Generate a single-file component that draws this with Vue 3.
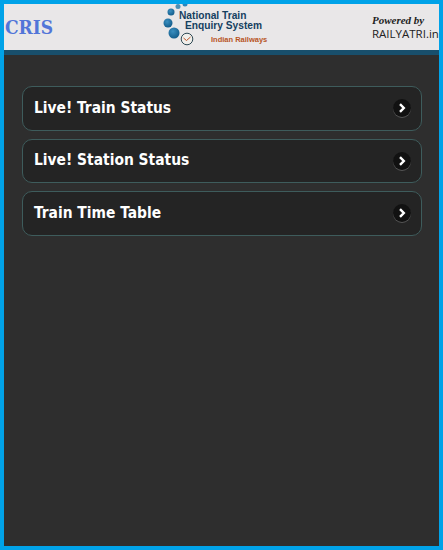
<script setup>
const items = ['Live! Train Status', 'Live! Station Status', 'Train Time Table']
</script>

<template>
  <div class="frame">
    <header class="head">
      <span class="cris">CRIS</span>
      <div class="ntes">
        <svg class="dots" width="42" height="46" viewBox="160 4 42 46">
          <defs>
            <radialGradient id="b" cx="40%" cy="35%" r="70%">
              <stop offset="0" stop-color="#3a8fc0" />
              <stop offset="1" stop-color="#115a88" />
            </radialGradient>
          </defs>
          <circle cx="185" cy="4" r="2.5" fill="#2a86bd" />
          <circle cx="178" cy="6.5" r="2.5" fill="#4a8fb5" />
          <circle cx="171" cy="12" r="3.5" fill="url(#b)" />
          <circle cx="168" cy="23" r="4.5" fill="url(#b)" />
          <circle cx="174" cy="33" r="5.5" fill="url(#b)" />
          <circle cx="187" cy="39" r="5.8" fill="#f0eeea" stroke="#2f4a55" stroke-width="1" />
          <path d="M183.5 38 L186.5 40.5 L190.5 37" fill="none" stroke="#c0562a" stroke-width="1" />
        </svg>
        <div class="ntes-text">
          <div class="t1">National Train</div>
          <div class="t2">Enquiry System</div>
          <div class="t3">Indian Railways</div>
        </div>
      </div>
      <div class="powered">
        <div class="by">Powered by</div>
        <div class="ry">RAILYATRI.in</div>
      </div>
    </header>
    <main class="body">
      <a v-for="item in items" :key="item" class="row">
        <span class="label">{{ item }}</span>
        <span class="arrow">
          <svg width="10" height="10" viewBox="0 0 10 10">
            <path d="M3 1.2 L6.8 5 L3 8.8" fill="none" stroke="#fff" stroke-width="2.4" />
          </svg>
        </span>
      </a>
    </main>
  </div>
</template>

<style>
html, body { margin: 0; padding: 0; }
</style>

<style scoped>
.frame {
  box-sizing: border-box;
  width: 443px;
  height: 550px;
  border: 4px solid #00a2e8;
  background: #2e2e2e;
  display: flex;
  flex-direction: column;
}
.head {
  box-sizing: border-box;
  height: 51px;
  flex: none;
  background: #e9e7e8;
  border-bottom: 5px solid #184f6c;
  display: flex;
  align-items: center;
  overflow: hidden;
}
.cris {
  flex: none;
  width: 155px;
  margin-left: 1px;
  font: bold 19px "DejaVu Serif Condensed", "DejaVu Serif", serif;
  color: #5275d8;
}
.ntes {
  flex: none;
  display: flex;
  width: 212px;
  height: 46px;
}
.dots { flex: none; margin-right: -42px; }
.ntes-text {
  font-family: "Liberation Sans", sans-serif;
  font-weight: bold;
  color: #15405f;
  font-size: 10.2px;
  line-height: 10.5px;
  padding-top: 6.5px;
  padding-left: 19px;
  white-space: nowrap;
}
.t2 { padding-left: 6px; }
.t3 {
  font-size: 7.5px;
  font-weight: bold;
  color: #b8551f;
  padding-left: 32px;
  line-height: 15px;
}
.powered {
  flex: none;
  width: 67px;
  color: #222;
  white-space: nowrap;
  overflow: hidden;
}
.by {
  font: italic bold 11px "Liberation Serif", cursive;
  line-height: 14px;
}
.ry {
  font: 11.5px "Open Sans", sans-serif;
  line-height: 14px;
}
.body {
  flex: 1;
  padding: 31px 17px 0 18px;
  display: flex;
  flex-direction: column;
  gap: 8px;
}
.row {
  box-sizing: border-box;
  height: 44.5px;
  border: 1px solid #3e5c5c;
  border-radius: 10px;
  background: #242424;
  display: flex;
  align-items: center;
  justify-content: space-between;
  padding: 0 10px 0 11px;
}
.label {
  font: bold 15.4px "DejaVu Sans Condensed", "DejaVu Sans", sans-serif;
  color: #fff;
  margin-top: -1px;
}
.arrow {
  width: 18px;
  height: 18px;
  border-radius: 50%;
  background: #111;
  box-shadow: 0 1px 0 #555;
  display: flex;
  align-items: center;
  justify-content: center;
}
</style>
